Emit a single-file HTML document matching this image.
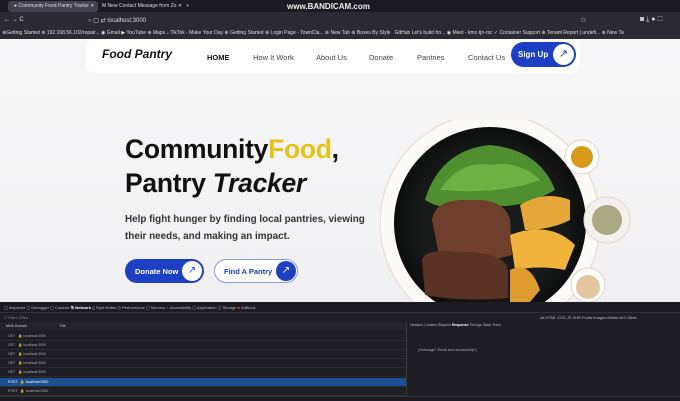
<!DOCTYPE html>
<html><head><style>
*{margin:0;padding:0;box-sizing:border-box}
body{width:680px;height:401px;overflow:hidden;background:#f4f4f6;font-family:"Liberation Sans",sans-serif;position:relative}
.abs{position:absolute}
.tabs{left:0;top:0;width:680px;height:12px;background:#1c1b22}
.url{left:0;top:12px;width:680px;height:16px;background:#2b2a33}
.bm{left:0;top:28px;width:680px;height:11px;background:#2b2a33;color:#ddd;font-size:5px;white-space:nowrap;line-height:11px;padding-left:2px}
.t{font-size:5px;color:#ddd;white-space:nowrap}
.page{left:0;top:39px;width:680px;height:263px;background:linear-gradient(#f7f7f8,#f0f0f2)}
.nav{left:86px;top:40px;width:494px;height:33px;background:#fff;border-radius:8px}
.nl{font-size:7.5px;color:#444;top:53px}
.dev{left:0;top:302px;width:680px;height:99px;background:#1f1e25}
.row{position:absolute;left:0;width:406px;height:9px;font-size:3.5px;color:#aaa;line-height:9px;border-bottom:1px solid #2c2b33}
</style></head><body>
<div class="abs tabs"></div>
<div class="abs" style="left:8px;top:1px;width:90px;height:11px;background:#42414d;border-radius:3px"></div>
<div class="abs t" style="left:14px;top:3px">● Community Food Pantry Tracke ✕</div>
<div class="abs t" style="left:102px;top:3px">M New Contact Message from Zo ✕ &nbsp; +</div>
<div class="abs" style="left:287px;top:2px;color:#eee;font-size:8px;font-weight:bold">www.BANDICAM.com</div>
<div class="abs url"></div>
<div class="abs t" style="left:4px;top:17px;font-size:6px">← → C</div>
<div class="abs t" style="left:88px;top:17px;font-size:6px">○ ▢ ⇄ localhost:3000</div>
<div class="abs t" style="left:580px;top:16px;font-size:7px">☆</div>
<div class="abs t" style="left:640px;top:16px;font-size:7px">◙ ⤓ ● ⬚</div>
<div class="abs bm">⊕Getting Started ⊕ 192.168.56.102/repair... ◉ Gmail ▶ YouTube ⊕ Maps ♪ TikTok - Make Your Day ⊕ Getting Started ⊕ Login Page - TownCla... ⊕ New Tab ⊕ Boxes By Style &nbsp; GitHub Let's build fro... ◉ Meet - kmc-tjn-rsc ✓ Container Support ⊕ Tenant Report | undefi... ⊕ New Ta</div>
<div class="abs page"></div>
<div class="abs nav"></div>
<div class="abs" style="left:102px;top:47px;font-size:12px;font-weight:bold;font-style:italic;color:#111">Food Pantry</div>
<div class="abs nl" style="left:207px;font-weight:bold;color:#111">HOME</div>
<div class="abs nl" style="left:253px">How It Work</div>
<div class="abs nl" style="left:316px">About Us</div>
<div class="abs nl" style="left:369px">Donate</div>
<div class="abs nl" style="left:417px">Pantries</div>
<div class="abs nl" style="left:468px">Contact Us</div>
<div class="abs" style="left:511px;top:42px;width:65px;height:25px;background:#1d3fc4;border-radius:13px"></div>
<div class="abs" style="left:518px;top:50px;font-size:8px;font-weight:bold;color:#fff">Sign Up</div>
<div class="abs" style="left:553px;top:44px;width:21px;height:21px;background:#fff;border-radius:50%;color:#1d3fc4;font-size:11px;text-align:center;line-height:21px">↗</div>

<div class="abs" style="left:125px;top:132px;font-size:26.5px;font-weight:bold;color:#111;letter-spacing:-0.3px;line-height:34px">Community<span style="color:#e8c21b">Food</span>,<br>Pantry <i>Tracker</i></div>
<div class="abs" style="left:125px;top:211px;font-size:9.9px;font-weight:bold;color:#333;line-height:17px">Help fight hunger by finding local pantries, viewing<br>their needs, and making an impact.</div>
<div class="abs" style="left:125px;top:259px;width:79px;height:24px;background:#1d3fc4;border-radius:12px"></div>
<div class="abs" style="left:135px;top:267px;font-size:7.5px;font-weight:bold;color:#fff">Donate Now</div>
<div class="abs" style="left:182px;top:261px;width:20px;height:20px;background:#fff;border-radius:50%;color:#1d3fc4;font-size:10px;text-align:center;line-height:20px">↗</div>
<div class="abs" style="left:214px;top:259px;width:84px;height:24px;border:1px solid #8a9be0;border-radius:12px;background:#fff"></div>
<div class="abs" style="left:224px;top:267px;font-size:7.5px;font-weight:bold;color:#1d3fc4">Find A Pantry</div>
<div class="abs" style="left:276px;top:261px;width:20px;height:20px;background:#1d3fc4;border-radius:50%;color:#fff;font-size:10px;text-align:center;line-height:20px">↗</div>

<svg class="abs" style="left:380px;top:120px" width="300" height="182">
<defs><radialGradient id="p" cx="50%" cy="50%" r="50%"><stop offset="0.7" stop-color="#1a1c1c"/><stop offset="1" stop-color="#0c0d0d"/></radialGradient></defs>
<circle cx="110" cy="103" r="110" fill="#fbfaf9" stroke="#eadfd8" stroke-width="1.5"/>
<circle cx="110" cy="103" r="96" fill="url(#p)"/>
<path d="M45 80 Q60 30 110 25 Q160 30 175 70 Q140 90 110 85 Q70 95 45 80Z" fill="#4f8f2f"/>
<path d="M60 70 Q80 40 110 45 Q140 40 160 60 Q120 75 60 70Z" fill="#6fb046"/>
<path d="M52 100 Q55 78 90 80 Q125 78 130 100 L132 135 Q100 145 60 140 Z" fill="#6e3f2c"/>
<path d="M42 140 Q45 128 80 132 Q125 132 128 150 L128 178 Q80 182 45 175 Z" fill="#5a3324"/>
<path d="M140 85 Q165 70 190 80 L190 100 Q170 110 145 110Z" fill="#e6a739"/>
<path d="M130 115 Q170 100 195 125 L185 150 Q160 145 135 150Z" fill="#f0b43d"/>
<path d="M130 150 Q150 140 160 170 L150 182 L130 182Z" fill="#e09b2f"/>
<circle cx="202" cy="37" r="17" fill="#fff" stroke="#e7d2ca"/>
<circle cx="202" cy="37" r="11" fill="#d89a1a"/>
<circle cx="227" cy="100" r="23" fill="#f3f1ee" stroke="#e7d2ca"/>
<circle cx="227" cy="100" r="15" fill="#a9a985"/>
<circle cx="208" cy="165" r="17" fill="#fff" stroke="#e7d2ca"/>
<circle cx="208" cy="167" r="12" fill="#e4c7a0"/>
</svg>

<div class="abs dev"></div>
<div class="abs" style="left:0;top:302px;width:680px;height:11px;background:#1c1b22;border-bottom:1px solid #333"></div>
<div class="abs t" style="left:4px;top:305px;font-size:4px;color:#bbb">▢ Inspector ▢ Debugger ▢ Console <b style="color:#fff">⇅ Network</b> {} Style Editor ◷ Performance ▢ Memory ↑ Accessibility ▢ Application ▢ Storage <span style="color:#e33">■</span> AdBlock</div>
<div class="abs t" style="left:4px;top:315px;font-size:4px;color:#888">▽ Filter URLs</div>
<div class="abs t" style="left:540px;top:315px;font-size:4px;color:#bbb">All HTML CSS JS XHR Fonts Images Media WS Other</div>
<div class="abs" style="left:0;top:322px;width:406px;height:8px;background:#25242b;font-size:3.5px;color:#ccc;line-height:8px;padding-left:6px">Meth Domain &nbsp;&nbsp;&nbsp;&nbsp;&nbsp;&nbsp;&nbsp;&nbsp;&nbsp;&nbsp;&nbsp;&nbsp;&nbsp;&nbsp;&nbsp;&nbsp;&nbsp;&nbsp;&nbsp;&nbsp;&nbsp;&nbsp;&nbsp;&nbsp;&nbsp;&nbsp;&nbsp;&nbsp;&nbsp;&nbsp;&nbsp;&nbsp; File</div>
<div class="row" style="top:332px;padding-left:8px">GET &nbsp; 🔒 localhost:3000</div>
<div class="row" style="top:341px;padding-left:8px">GET &nbsp; 🔒 localhost:3000</div>
<div class="row" style="top:350px;padding-left:8px">GET &nbsp; 🔒 localhost:3000</div>
<div class="row" style="top:359px;padding-left:8px">GET &nbsp; 🔒 localhost:3000</div>
<div class="row" style="top:368px;padding-left:8px">GET &nbsp; 🔒 localhost:3000</div>
<div class="row" style="top:378px;padding-left:8px;background:#1f4f8f;color:#fff">POST &nbsp; 🔒 localhost:3000</div>
<div class="row" style="top:387px;padding-left:8px">POST &nbsp; 🔒 localhost:3000</div>
<div class="abs" style="left:0;top:396px;width:680px;height:5px;background:#1c1b22;border-top:1px solid #333"></div>
<div class="abs" style="left:406px;top:322px;width:1px;height:74px;background:#3a3940"></div>
<div class="abs t" style="left:410px;top:323px;font-size:3.5px;color:#bbb">Headers Cookies Request <b style="color:#fff">Response</b> Timings Stack Trace</div>
<div class="abs t" style="left:418px;top:348px;font-size:3.5px;color:#aac">{"message":"Email sent successfully"}</div>
</body></html>
